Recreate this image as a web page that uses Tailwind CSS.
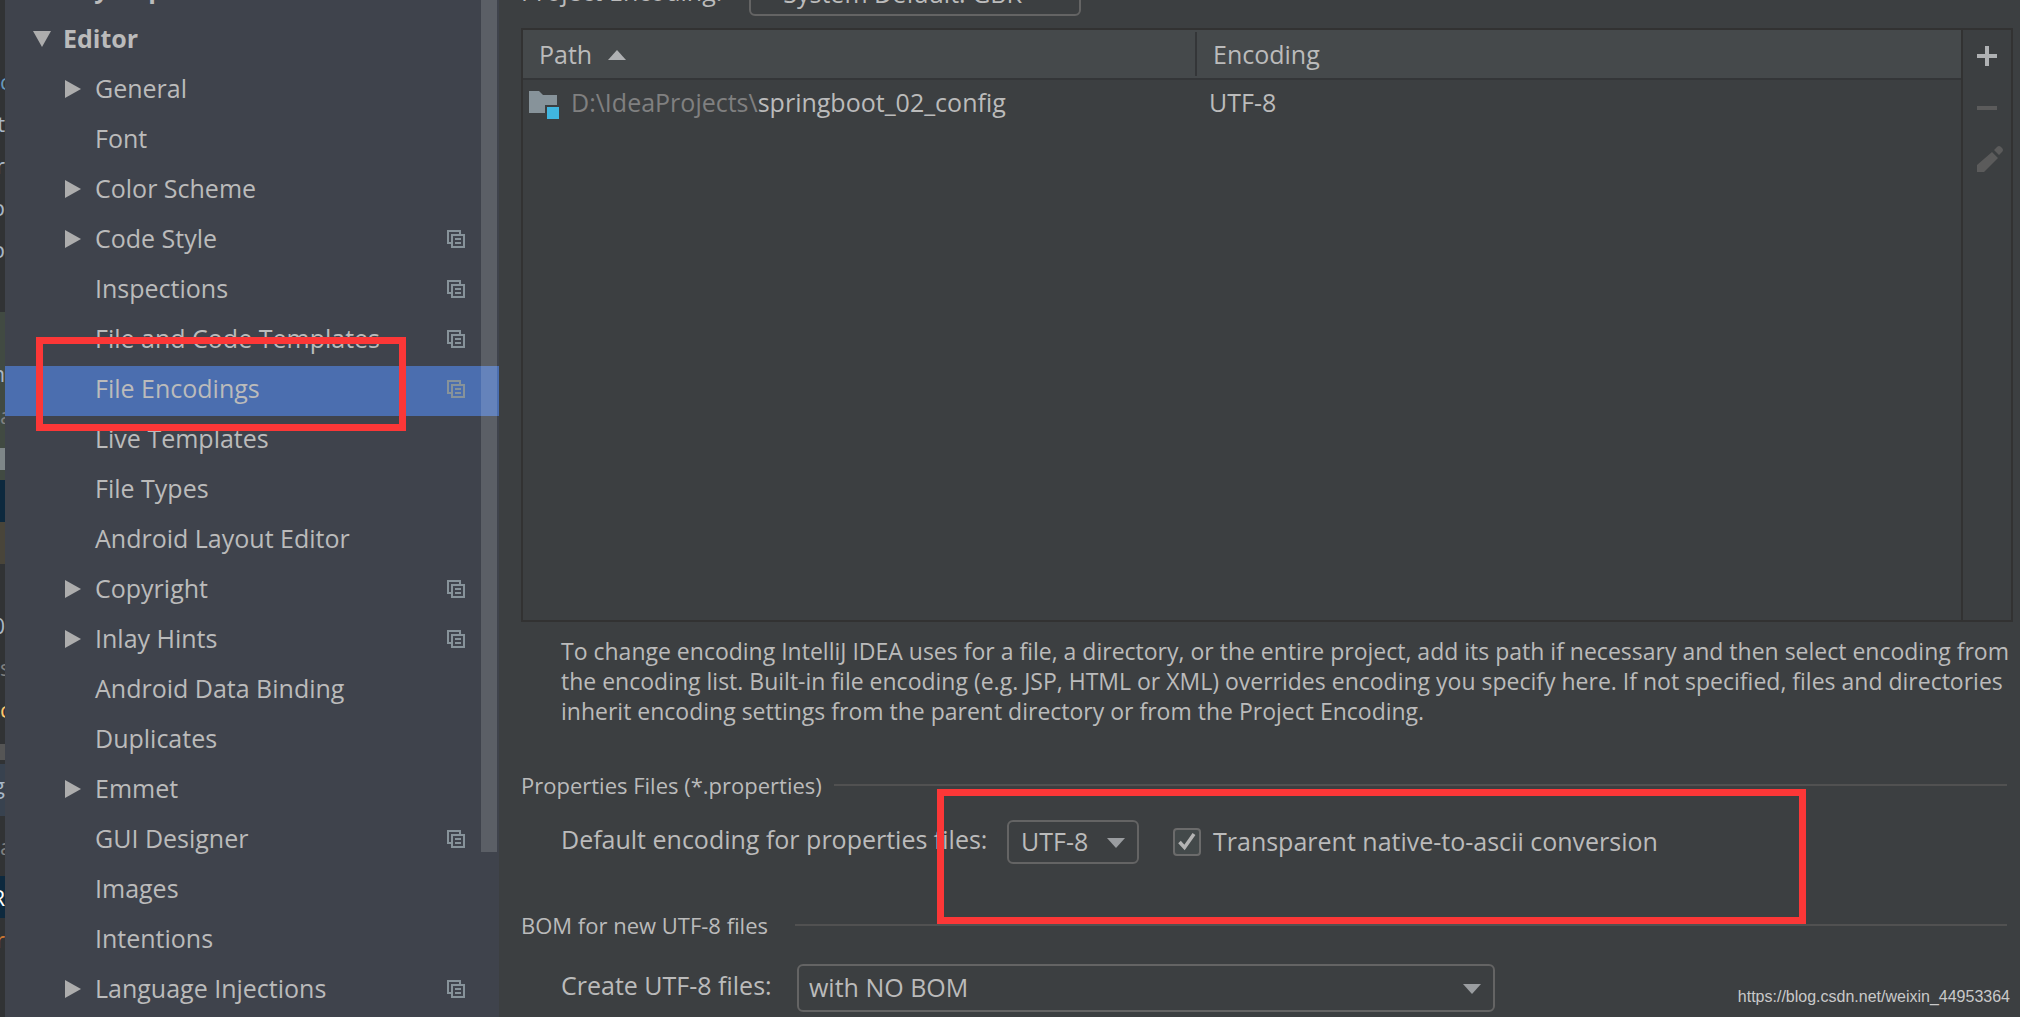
<!DOCTYPE html>
<html lang="en">
<head>
    <meta charset="UTF-8">
    <meta name="viewport" content="width=device-width, initial-scale=1.0">
    <title>Settings - File Encodings</title>
    <script src="https://cdn.jsdelivr.net/npm/@tailwindcss/browser@4"></script>
</head>
<body class="flex h-screen overflow-hidden bg-[#3c3f41] font-['Open_Sans','Noto_Sans',sans-serif] text-[25px] text-[#bbbbbb]">

    <svg class="hidden">
        <symbol id="copy" viewBox="0 0 18 18">
            <path d="M4 13H1V1h12v3" fill="none" stroke="currentColor" stroke-width="2"/>
            <path d="M5 5h12v12H5zM8 9h6M8 13h6" fill="none" stroke="currentColor" stroke-width="2"/>
        </symbol>
        <symbol id="right" viewBox="0 0 16 18"><path d="M0 0l16 9-16 9z" fill="currentColor"/></symbol>
        <symbol id="down" viewBox="0 0 18 16"><path d="M0 0h18L9 16z" fill="currentColor"/></symbol>
        <symbol id="drop" viewBox="0 0 18 10"><path d="M0 0h18L9 10z" fill="currentColor"/></symbol>
    </svg>

    <!-- editor window behind the dialog -->
    <div class="flex w-[5px] shrink-0 flex-col overflow-hidden bg-[#313335] text-[22px] leading-[42px] text-[#a9b7c6]">
        <div class="h-[60px] shrink-0"></div>
        <div class="flex h-[42px] shrink-0 justify-start text-[#6897bb]">c</div>
        <div class="flex h-[42px] shrink-0 justify-end">t</div>
        <div class="flex h-[42px] shrink-0 justify-end">r</div>
        <div class="flex h-[42px] shrink-0 justify-end">p</div>
        <div class="flex h-[42px] shrink-0 justify-end">p</div>
        <div class="h-[42px] shrink-0"></div>
        <div class="h-10 shrink-0 bg-[#414a42]"></div>
        <div class="flex h-[42px] shrink-0 justify-end bg-[#414a42]">m</div>
        <div class="flex h-[42px] shrink-0 justify-start bg-[#414a42] text-[#808080]">a</div>
        <div class="h-3 shrink-0 bg-[#414a42]"></div>
        <div class="h-[22px] shrink-0 bg-[#7e8688]"></div>
        <div class="h-[10px] shrink-0 bg-[#414a42]"></div>
        <div class="h-[42px] shrink-0 bg-[#0d293e]"></div>
        <div class="h-[42px] shrink-0 bg-[#49453a]"></div>
        <div class="h-10 shrink-0"></div>
        <div class="flex h-[42px] shrink-0 justify-end">0</div>
        <div class="flex h-[42px] shrink-0 justify-start text-[#808080]">s</div>
        <div class="flex h-[42px] shrink-0 justify-start text-[#ffc66d]">c</div>
        <div class="h-[14px] shrink-0"></div>
        <div class="h-4 shrink-0 bg-[#555555]"></div>
        <div class="h-1 shrink-0"></div>
        <div class="flex h-[52px] shrink-0 justify-end bg-[#38424f]">g</div>
        <div class="flex h-[60px] shrink-0 items-center justify-start text-[#808080]">a</div>
        <div class="flex h-[42px] shrink-0 justify-end bg-[#0d293e] text-white">R</div>
        <div class="flex h-[42px] shrink-0 justify-end text-[#cc7832]">r</div>
    </div>

    <!-- settings tree -->
    <nav class="relative w-[494px] shrink-0 bg-[#3f434c]">
        <div class="h-screen overflow-hidden">
            <ul id="tree" class="-mt-[34px]"></ul>
        </div>
        <div class="absolute top-0 right-[2px] z-20 h-[852px] w-4 bg-white/15"></div>
    </nav>

    <main class="min-w-0 flex-1 pr-[7px] pl-[22px]">
        <div class="-mt-7 flex h-11 items-center">
            <label for="project" class="w-[228px] shrink-0 pb-1">Project Encoding:</label>
            <select id="project" class="h-11 w-[332px] appearance-none rounded-md border-2 border-[#646464] px-[18px]">
                <option>&lt;System Default: GBK&gt;</option>
            </select>
        </div>

        <div class="mt-3 flex h-[594px] border-2 border-[#323232]">
            <div class="flex-1">
                <table class="w-full table-fixed border-separate border-spacing-0 text-left">
                    <thead class="bg-[#45494b]">
                        <tr>
                            <th class="h-[50px] w-[674px] border-b-2 border-[#343638] p-0 font-normal">
                                <div class="flex h-11 items-center gap-4 border-r-2 border-[#343638] pt-[2px] pl-4">
                                    Path
                                    <svg class="h-[10px] w-[18px] rotate-180 text-[#afb1b3]"><use href="#drop"/></svg>
                                </div>
                            </th>
                            <th class="h-[50px] border-b-2 border-[#343638] p-0 font-normal">
                                <div class="flex h-11 items-center pt-[2px] pl-4">Encoding</div>
                            </th>
                        </tr>
                    </thead>
                    <tbody>
                        <tr>
                            <td class="p-0">
                                <div class="flex h-12 items-center gap-[11px] pb-[2px] pl-[6px]">
                                    <svg class="mt-1 h-7 w-[31px]" viewBox="0 0 31 28">
                                        <path d="M0 0h10l4 4h14v10H16v8H0z" fill="#87939a"/>
                                        <path d="M18 16h12v12H18z" fill="#40b6e0"/>
                                    </svg>
                                    <span><span class="text-[#808080]">D:\IdeaProjects\</span>springboot_02_config</span>
                                </div>
                            </td>
                            <td class="p-0"><div class="flex h-12 items-center pb-[2px] pl-3">UTF-8</div></td>
                        </tr>
                    </tbody>
                </table>
            </div>
            <div class="flex w-[50px] flex-col items-center border-l-2 border-[#323232] pt-[10px] text-[#5b5b5b]">
                <button aria-label="Add" class="flex h-[52px] w-8 items-start justify-center pt-[6px] text-[#afb1b3]">
                    <svg class="h-5 w-5" viewBox="0 0 20 20"><path d="M8 0h4v8h8v4h-8v8H8v-8H0V8h8z" fill="currentColor"/></svg>
                </button>
                <button aria-label="Remove" class="flex h-[52px] w-8 items-start justify-center pt-[6px]">
                    <svg class="h-5 w-5" viewBox="0 0 20 20"><path d="M0 8h20v4H0z" fill="currentColor"/></svg>
                </button>
                <button aria-label="Edit" class="flex h-[52px] w-8 items-start justify-end pt-[2px]">
                    <svg class="h-[26px] w-[26px]" viewBox="0 0 26 26">
                        <path d="M15 6l6 6L7 26H0v-7zM17 4l3-3q2-2 4 0l1 1q2 2 0 4l-3 3z" fill="currentColor"/>
                    </svg>
                </button>
            </div>
        </div>

        <p class="mt-[14px] pl-10 text-[23px] leading-[30px] whitespace-nowrap">
            To change encoding IntelliJ IDEA uses for a file, a directory, or the entire project, add its path if necessary and then select encoding from<br>
            the encoding list. Built-in file encoding (e.g. JSP, HTML or XML) overrides encoding you specify here. If not specified, files and directories<br>
            inherit encoding settings from the parent directory or from the Project Encoding.
        </p>

        <div class="mt-11 flex items-center gap-3 pr-[6px]">
            <h2 class="text-[22px] leading-[30px]">Properties Files (*.properties)</h2>
            <hr class="flex-1 border-t-2 border-[#515151]">
        </div>
        <div class="relative mt-5 ml-10 flex h-11 items-center">
            <label for="props" class="w-[446px] shrink-0 pb-1">Default encoding for properties files:</label>
            <div class="relative w-[132px]">
                <select id="props" class="block h-11 w-full appearance-none rounded-md border-2 border-[#646464] px-3">
                    <option>UTF-8</option>
                </select>
                <svg class="pointer-events-none absolute top-[18px] right-[14px] h-[10px] w-[18px] text-[#9a9da0]"><use href="#drop"/></svg>
            </div>
            <div class="ml-[34px] grid h-7 w-7 place-items-center">
                <input id="ascii" type="checkbox" checked class="col-start-1 row-start-1 h-7 w-7 appearance-none rounded-sm border-2 border-[#6b6b6b] bg-[#43494a]">
                <svg class="pointer-events-none col-start-1 row-start-1 h-7 w-7" viewBox="0 0 28 28"><path d="M6.500 14l5 5.500L21 6" fill="none" stroke="#b4b4b4" stroke-width="3.500"/></svg>
            </div>
            <label for="ascii" class="ml-3">Transparent native-to-ascii conversion</label>
            <div class="pointer-events-none absolute -top-[31px] left-[376px] h-[135px] w-[869px] border-[7px] border-[#fc3737]"></div>
        </div>

        <div class="mt-[46px] flex items-center gap-3 pr-[6px]">
            <h2 class="min-w-[262px] text-[22px] leading-[30px]">BOM for new UTF-8 files</h2>
            <hr class="flex-1 border-t-2 border-[#515151]">
        </div>
        <div class="mt-6 ml-10 flex h-12 items-center">
            <label for="bom" class="w-[236px] shrink-0 pb-1">Create UTF-8 files:</label>
            <div class="relative w-[698px]">
                <select id="bom" class="block h-12 w-full appearance-none rounded-md border-2 border-[#646464] px-[10px]">
                    <option>with NO BOM</option>
                </select>
                <svg class="pointer-events-none absolute top-5 right-[14px] h-[10px] w-[18px] text-[#9a9da0]"><use href="#drop"/></svg>
            </div>
        </div>
    </main>

    <div class="absolute right-[10px] bottom-2 font-['Liberation_Sans',Arial,sans-serif] text-base text-[#c9c9c9]">https://blog.csdn.net/weixin_44953364</div>

    <script>
        // name, has children, has project-level settings
        const items = [
            ['General', true, false],
            ['Font', false, false],
            ['Color Scheme', true, false],
            ['Code Style', true, true],
            ['Inspections', false, true],
            ['File and Code Templates', false, true],
            ['File Encodings', false, true],
            ['Live Templates', false, false],
            ['File Types', false, false],
            ['Android Layout Editor', false, false],
            ['Copyright', true, true],
            ['Inlay Hints', true, true],
            ['Android Data Binding', false, false],
            ['Duplicates', false, false],
            ['Emmet', true, false],
            ['GUI Designer', false, true],
            ['Images', false, false],
            ['Intentions', false, false],
            ['Language Injections', true, true],
        ];

        let html = `
            <li class="flex h-[50px] items-center pb-1 pl-[58px] font-bold">Keymap</li>
            <li class="flex h-[50px] items-center pb-1 pl-7 font-bold">
                <svg class="mr-3 h-4 w-[18px] text-[#adadad]"><use href="#down"/></svg>Editor
            </li>`;

        items.forEach(([name, parent, project]) => {
            const selected = name === 'File Encodings';
            html += `
                <li class="relative flex h-[50px] items-center pb-1 pr-[34px] pl-[60px] ${selected ? 'z-10 bg-[#4b6eaf]' : ''}">
                    <span class="w-[30px] shrink-0">${parent ? '<svg class="h-[18px] w-4 text-[#adadad]"><use href="#right"/></svg>' : ''}</span>
                    <span class="flex-1">${name}</span>
                    ${project ? '<svg class="h-[18px] w-[18px] text-[#87939a]"><use href="#copy"/></svg>' : ''}
                    ${selected ? '<div class="pointer-events-none absolute -top-[29px] left-[31px] h-[94px] w-[370px] border-[7px] border-[#fc3737]"></div>' : ''}
                </li>`;
        });
        document.getElementById('tree').innerHTML = html;
    </script>
</body>
</html>
